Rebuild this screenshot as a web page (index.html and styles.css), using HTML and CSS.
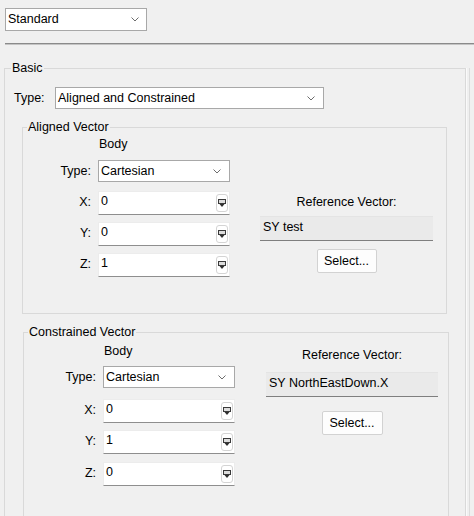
FILE: index.html
```html
<!DOCTYPE html>
<html>
<head>
<meta charset="utf-8">
<link rel="stylesheet" href="styles.css">
</head>
<body>
<div class="page">
  <div class="top">
    <div class="combo combo-std"><span>Standard</span><svg class="chev" width="8" height="5" viewBox="0 0 8 5"><path d="M0.5 0.5 L4 4 L7.5 0.5" fill="none" stroke="#6d6d6d" stroke-width="1"/></svg></div>
  </div>
  <div class="sep"></div>

  <fieldset class="group basic">
    <legend>Basic</legend>
    <div class="basic-type">
      <span class="basic-lbl">Type:</span>
      <div class="combo combo-wide"><span>Aligned and Constrained</span><svg class="chev" width="8" height="5" viewBox="0 0 8 5"><path d="M0.5 0.5 L4 4 L7.5 0.5" fill="none" stroke="#6d6d6d" stroke-width="1"/></svg></div>
    </div>

    <fieldset class="group vec vec-aligned">
      <legend>Aligned Vector</legend>
      <div class="vec-body">
        <div class="coords">
          <div class="row row-body"><span class="lbl"></span><span class="body-lbl">Body</span></div>
          <div class="row row-type"><span class="lbl">Type:</span><div class="combo combo-small"><span>Cartesian</span><svg class="chev" width="8" height="5" viewBox="0 0 8 5"><path d="M0.5 0.5 L4 4 L7.5 0.5" fill="none" stroke="#6d6d6d" stroke-width="1"/></svg></div></div>
          <div class="row row-num row-x"><span class="lbl lbl-num">X:</span><div class="num"><span>0</span><span class="spin"><svg width="12" height="18" viewBox="0 0 12 18"><rect x="2.5" y="5.5" width="7" height="4" fill="#dcdcdc" stroke="#3a3a3a"/><path d="M3.5 10 H8.5 L6 13 Z" fill="#2e2e2e"/></svg></span></div></div>
          <div class="row row-num row-y"><span class="lbl lbl-num">Y:</span><div class="num"><span>0</span><span class="spin"><svg width="12" height="18" viewBox="0 0 12 18"><rect x="2.5" y="5.5" width="7" height="4" fill="#dcdcdc" stroke="#3a3a3a"/><path d="M3.5 10 H8.5 L6 13 Z" fill="#2e2e2e"/></svg></span></div></div>
          <div class="row row-num row-z"><span class="lbl lbl-num">Z:</span><div class="num"><span>1</span><span class="spin"><svg width="12" height="18" viewBox="0 0 12 18"><rect x="2.5" y="5.5" width="7" height="4" fill="#dcdcdc" stroke="#3a3a3a"/><path d="M3.5 10 H8.5 L6 13 Z" fill="#2e2e2e"/></svg></span></div></div>
        </div>
        <div class="ref">
          <div class="ref-lbl">Reference Vector:</div>
          <div class="ref-field">SY test</div>
          <button class="btn">Select...</button>
        </div>
      </div>
    </fieldset>

    <fieldset class="group vec vec-constrained">
      <legend>Constrained Vector</legend>
      <div class="vec-body">
        <div class="coords">
          <div class="row row-body"><span class="lbl"></span><span class="body-lbl">Body</span></div>
          <div class="row row-type"><span class="lbl">Type:</span><div class="combo combo-small"><span>Cartesian</span><svg class="chev" width="8" height="5" viewBox="0 0 8 5"><path d="M0.5 0.5 L4 4 L7.5 0.5" fill="none" stroke="#6d6d6d" stroke-width="1"/></svg></div></div>
          <div class="row row-num row-x"><span class="lbl lbl-num">X:</span><div class="num"><span>0</span><span class="spin"><svg width="12" height="18" viewBox="0 0 12 18"><rect x="2.5" y="5.5" width="7" height="4" fill="#dcdcdc" stroke="#3a3a3a"/><path d="M3.5 10 H8.5 L6 13 Z" fill="#2e2e2e"/></svg></span></div></div>
          <div class="row row-num row-y"><span class="lbl lbl-num">Y:</span><div class="num"><span>1</span><span class="spin"><svg width="12" height="18" viewBox="0 0 12 18"><rect x="2.5" y="5.5" width="7" height="4" fill="#dcdcdc" stroke="#3a3a3a"/><path d="M3.5 10 H8.5 L6 13 Z" fill="#2e2e2e"/></svg></span></div></div>
          <div class="row row-num row-z"><span class="lbl lbl-num">Z:</span><div class="num"><span>0</span><span class="spin"><svg width="12" height="18" viewBox="0 0 12 18"><rect x="2.5" y="5.5" width="7" height="4" fill="#dcdcdc" stroke="#3a3a3a"/><path d="M3.5 10 H8.5 L6 13 Z" fill="#2e2e2e"/></svg></span></div></div>
        </div>
        <div class="ref">
          <div class="ref-lbl">Reference Vector:</div>
          <div class="ref-field">SY NorthEastDown.X</div>
          <button class="btn">Select...</button>
        </div>
      </div>
    </fieldset>
  </fieldset>
</div>
</body>
</html>
```

FILE: styles.css
```css
* { box-sizing: border-box; }

html, body {
  margin: 0;
  padding: 0;
  background: #f0f0f0;
}

body {
  font-family: "Liberation Sans", Arial, sans-serif;
  font-size: 12.5px;
  line-height: 15px;
  color: #000;
}

.page {
  width: 474px;
  height: 516px;
  overflow: hidden;
}

.top {
  padding: 8px 0 0 5px;
}

/* combo boxes */
.combo {
  display: flex;
  align-items: center;
  justify-content: space-between;
  background: #fff;
  border: 1px solid #a8a8a8;
  padding: 0 7px 0 2px;
  height: 23px;
}

.combo .chev { flex: none; }

.combo-std { width: 142px; }

.combo-wide { width: 269px; height: 22px; padding-left: 2px; padding-right: 8px; }

.combo-small { width: 132px; height: 22px; padding-left: 2px; padding-right: 8px; }

.sep {
  margin: 12px 0 0 5px;
  border-top: 1px solid #8a8a8a;
  border-bottom: 1px solid #c4c4c4;
}

/* group boxes */
.group {
  margin: 0;
  padding: 0;
  border: 1px solid #d9d9d9;
  min-width: 0;
}

.group legend {
  padding: 0 1px;
  line-height: 15px;
}

.basic {
  margin: 16px 0 0 4px;
  width: 462px;
  height: 480px;
  box-shadow: 1px 0 0 #fafafa, 3px 0 0 #f0f0f0, 4px 0 0 #dcdcdc;
}

.basic legend { margin-left: 6px; }

.basic-type {
  display: flex;
  align-items: center;
  margin-top: 11px;
}

.basic-lbl {
  width: 50px;
  padding-left: 9px;
}

.vec legend { margin-left: 4px; }

.vec-aligned {
  margin: 11px 0 0 17px;
  width: 425px;
  padding-bottom: 36px;
}

.vec-constrained {
  margin: 11px 0 0 18px;
  width: 426px;
  padding-bottom: 60px;
}

.vec-body {
  display: flex;
  align-items: flex-start;
}

.coords {
  display: flex;
  flex-direction: column;
}

.row {
  display: flex;
  align-items: center;
}

.row-num { align-items: flex-start; }

.lbl {
  width: 68px;
  margin-right: 7px;
  text-align: right;
  flex: none;
}

.vec-constrained .lbl { width: 72px; }

.lbl-num { padding-top: 4px; }

.body-lbl { padding-left: 1px; }

.vec-aligned .row-body { margin-top: 2px; }
.vec-aligned .row-type { margin-top: 8px; }
.vec-aligned .row-x { margin-top: 9px; }
.vec-aligned .row-y { margin-top: 7px; }
.vec-aligned .row-z { margin-top: 7px; }

.vec-constrained .row-body { margin-top: 4px; }
.vec-constrained .row-type { margin-top: 7px; }
.vec-constrained .row-x { margin-top: 11px; }
.vec-constrained .row-y { margin-top: 7px; }
.vec-constrained .row-z { margin-top: 8px; }

.num {
  display: flex;
  justify-content: space-between;
  align-items: flex-start;
  width: 132px;
  height: 24px;
  background: #fff;
  border: 1px solid #ececec;
  border-bottom: 1px solid #8e8e8e;
  padding: 2px 1px 0 2px;
}

.spin {
  display: block;
  width: 12px;
  height: 18px;
  border: 1px solid #d4d4d4;
  border-radius: 3px;
  background: #fff;
}

.spin svg {
  display: block;
  margin: -1px 0 0 -1px;
}

/* reference column */
.ref {
  display: flex;
  flex-direction: column;
  align-items: center;
}

.vec-aligned .ref {
  margin: 60px 0 0 30px;
  width: 173px;
}

.vec-constrained .ref {
  margin: 8px 0 0 31px;
  width: 172px;
}

.ref-lbl { text-align: center; }

.ref-field {
  align-self: stretch;
  height: 25px;
  background: #eaeaea;
  border-top: 1px solid #e4e4e4;
  border-bottom: 1px solid #7f7f7f;
  padding: 3px 0 0 3px;
}

.vec-aligned .ref-field { margin-top: 6px; }
.vec-constrained .ref-field { margin-top: 9px; }

.btn {
  font: inherit;
  color: #000;
  width: 60px;
  height: 24px;
  padding: 0;
  background: #fdfdfd;
  border: 1px solid #d2d2d2;
  border-radius: 2px;
}

.vec-aligned .btn { margin-top: 8px; }
.vec-constrained .btn { margin-top: 14px; width: 61px; }
```
